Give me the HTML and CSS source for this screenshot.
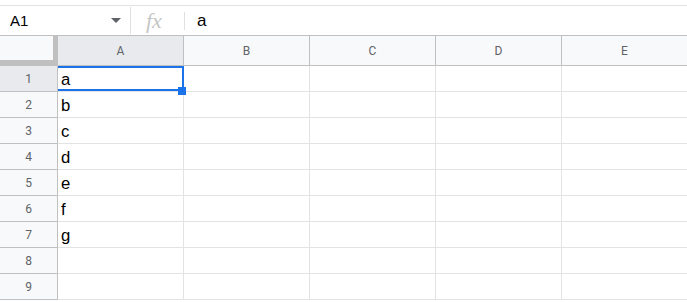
FILE: index.html
```html
<!DOCTYPE html>
<html>
<head>
<meta charset="utf-8">
<link rel="stylesheet" href="styles.css">
</head>
<body>
<div class="formula-bar">
  <div class="name-box"><span class="ref">A1</span><span class="caret"></span></div>
  <div class="sep sep-tall"></div>
  <div class="fx">fx</div>
  <div class="sep sep-short"></div>
  <div class="formula">a</div>
</div>
<div class="sheet">
  <div class="grid">
    <div class="corner"></div>
    <div class="col-head active">A</div>
    <div class="col-head">B</div>
    <div class="col-head">C</div>
    <div class="col-head">D</div>
    <div class="col-head">E</div>

    <div class="row-head active">1</div><div class="cell">a</div><div class="cell"></div><div class="cell"></div><div class="cell"></div><div class="cell"></div>
    <div class="row-head">2</div><div class="cell">b</div><div class="cell"></div><div class="cell"></div><div class="cell"></div><div class="cell"></div>
    <div class="row-head">3</div><div class="cell">c</div><div class="cell"></div><div class="cell"></div><div class="cell"></div><div class="cell"></div>
    <div class="row-head">4</div><div class="cell">d</div><div class="cell"></div><div class="cell"></div><div class="cell"></div><div class="cell"></div>
    <div class="row-head">5</div><div class="cell">e</div><div class="cell"></div><div class="cell"></div><div class="cell"></div><div class="cell"></div>
    <div class="row-head">6</div><div class="cell">f</div><div class="cell"></div><div class="cell"></div><div class="cell"></div><div class="cell"></div>
    <div class="row-head">7</div><div class="cell">g</div><div class="cell"></div><div class="cell"></div><div class="cell"></div><div class="cell"></div>
    <div class="row-head">8</div><div class="cell"></div><div class="cell"></div><div class="cell"></div><div class="cell"></div><div class="cell"></div>
    <div class="row-head">9</div><div class="cell"></div><div class="cell"></div><div class="cell"></div><div class="cell"></div><div class="cell"></div>
  </div>
  <div class="selection"><div class="handle"></div></div>
</div>
</body>
</html>
```

FILE: styles.css
```css
* { box-sizing: border-box; }

html, body {
  margin: 0;
  padding: 0;
  background: #ffffff;
  overflow: hidden;
}

body {
  width: 687px;
  height: 302px;
  font-family: "Liberation Sans", Arial, sans-serif;
}

.formula-bar {
  margin-top: 5px;
  border-top: 1px solid #e1e1e1;
  height: 30px;
  display: flex;
  align-items: center;
}

.name-box {
  width: 130px;
  height: 29px;
  padding: 0 9px 0 10px;
  display: flex;
  align-items: center;
  justify-content: space-between;
}

.ref {
  font-family: "Liberation Sans", Arial, sans-serif;
  font-size: 15px;
  color: #000000;
}

.caret {
  width: 0;
  height: 0;
  border-left: 5px solid transparent;
  border-right: 5px solid transparent;
  border-top: 5px solid #5f6368;
}

.sep {
  width: 1px;
  background: #e0e0e0;
}

.sep-tall { height: 27px; }
.sep-short { height: 18px; }

.fx {
  width: 53px;
  padding-left: 15px;
  font-family: "Liberation Serif", "Times New Roman", serif;
  font-style: italic;
  font-size: 22px;
  color: #c4c7c5;
  line-height: 29px;
}

.formula {
  padding-left: 12px;
  font-size: 17px;
  color: #000000;
}

.sheet {
  position: relative;
  border-top: 1px solid #c0c0c0;
}

.grid {
  display: grid;
  grid-template-columns: 58px repeat(5, 126px);
  grid-template-rows: 30px repeat(9, 26px);
}

.corner {
  background: #f8f9fa;
  border-right: 5px solid #c0c0c0;
  border-bottom: 6px solid #c0c0c0;
}

.col-head,
.row-head {
  background: #f8f9fa;
  border-right: 1px solid #c0c0c0;
  border-bottom: 1px solid #c0c0c0;
  display: flex;
  align-items: center;
  justify-content: center;
  font-family: Roboto, "Liberation Sans", sans-serif;
  font-size: 12px;
  color: #5f6368;
}

.col-head.active,
.row-head.active {
  background: #e8eaed;
}

.cell {
  border-right: 1px solid #e2e3e3;
  border-bottom: 1px solid #e2e3e3;
  display: flex;
  align-items: flex-end;
  padding: 0 3px 2px 3px;
  font-size: 16.7px;
  line-height: 19px;
  color: #000000;
}

.selection {
  position: absolute;
  left: 58px;
  top: 30px;
  width: 126px;
  height: 25px;
  border: 2px solid #1a73e8;
  border-left: none;
}

.handle {
  position: absolute;
  left: 120px;
  top: 19px;
  width: 8px;
  height: 8px;
  background: #1a73e8;
}
```
